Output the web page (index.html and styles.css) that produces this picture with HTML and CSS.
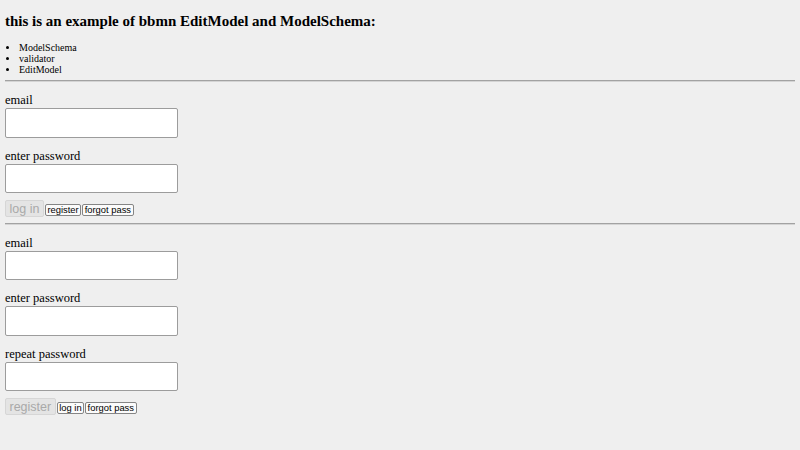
FILE: index.html
```html
<!DOCTYPE html>
<html lang="en">
<head>
<meta charset="utf-8">
<title>bbmn EditModel and ModelSchema</title>
<link rel="stylesheet" href="styles.css">
</head>
<body>
<h2 class="title">this is an example of bbmn EditModel and ModelSchema:</h2>
<ul class="topics">
  <li>ModelSchema</li>
  <li>validator</li>
  <li>EditModel</li>
</ul>
<hr class="divider">
<form class="auth-form">
  <div class="field">
    <label class="field-label">email</label>
    <input class="field-input" type="text">
  </div>
  <div class="field">
    <label class="field-label">enter password</label>
    <input class="field-input" type="password">
  </div>
  <div class="actions">
    <button class="btn btn-primary" type="button" disabled>log in</button>
    <button class="btn btn-small" type="button">register</button>
    <button class="btn btn-small" type="button">forgot pass</button>
  </div>
</form>
<hr class="divider">
<form class="auth-form">
  <div class="field">
    <label class="field-label">email</label>
    <input class="field-input" type="text">
  </div>
  <div class="field">
    <label class="field-label">enter password</label>
    <input class="field-input" type="password">
  </div>
  <div class="field">
    <label class="field-label">repeat password</label>
    <input class="field-input" type="password">
  </div>
  <div class="actions">
    <button class="btn btn-primary" type="button" disabled>register</button>
    <button class="btn btn-small" type="button">log in</button>
    <button class="btn btn-small" type="button">forgot pass</button>
  </div>
</form>
</body>
</html>
```
FILE: styles.css
```css
html {
  background: #efefef;
}

body {
  margin: 0;
  padding: 0 5px;
  font-family: "Liberation Serif", "Times New Roman", serif;
  color: #000;
  background: #efefef;
}

.title {
  margin: 12.5px 0 0;
  font-size: 15px;
  font-weight: bold;
}

.topics {
  margin: 12.3px 0 0;
  padding-left: 14px;
  font-size: 10px;
  list-style: disc;
}

.divider {
  margin: 5.5px 0 0;
  height: 0;
  border: 0;
  border-top: 1px solid #a2a2a2;
  border-bottom: 1px solid #d4d4d4;
}

.auth-form {
  margin: 0;
  padding-top: 11px;
}

.field + .field {
  margin-top: 11px;
}

.field-label {
  display: block;
  font-size: 12.5px;
}

.field-input {
  display: block;
  box-sizing: border-box;
  width: 173px;
  height: 29.5px;
  margin: 0;
  padding: 0 2px;
  border: 1px solid #9c9c9c;
  border-radius: 2px;
  background: #fff;
}

.actions {
  display: flex;
  align-items: baseline;
  gap: 1px;
  margin-top: 6.5px;
  margin-bottom: 2px;
}

.btn {
  margin: 0;
  font-family: "Liberation Sans", Arial, sans-serif;
  border-radius: 2px;
}

.btn-primary {
  font-size: 12.5px;
  padding: 0.8px 3.5px;
  border: 1px solid #d6d6d6;
  background: #e4e4e4;
  color: #a9a9a9;
}

.btn-small {
  font-size: 9.4px;
  line-height: 10px;
  padding: 0 1.5px;
  border: 1px solid #858585;
  background: #fbfbfb;
  color: #000;
}
```
